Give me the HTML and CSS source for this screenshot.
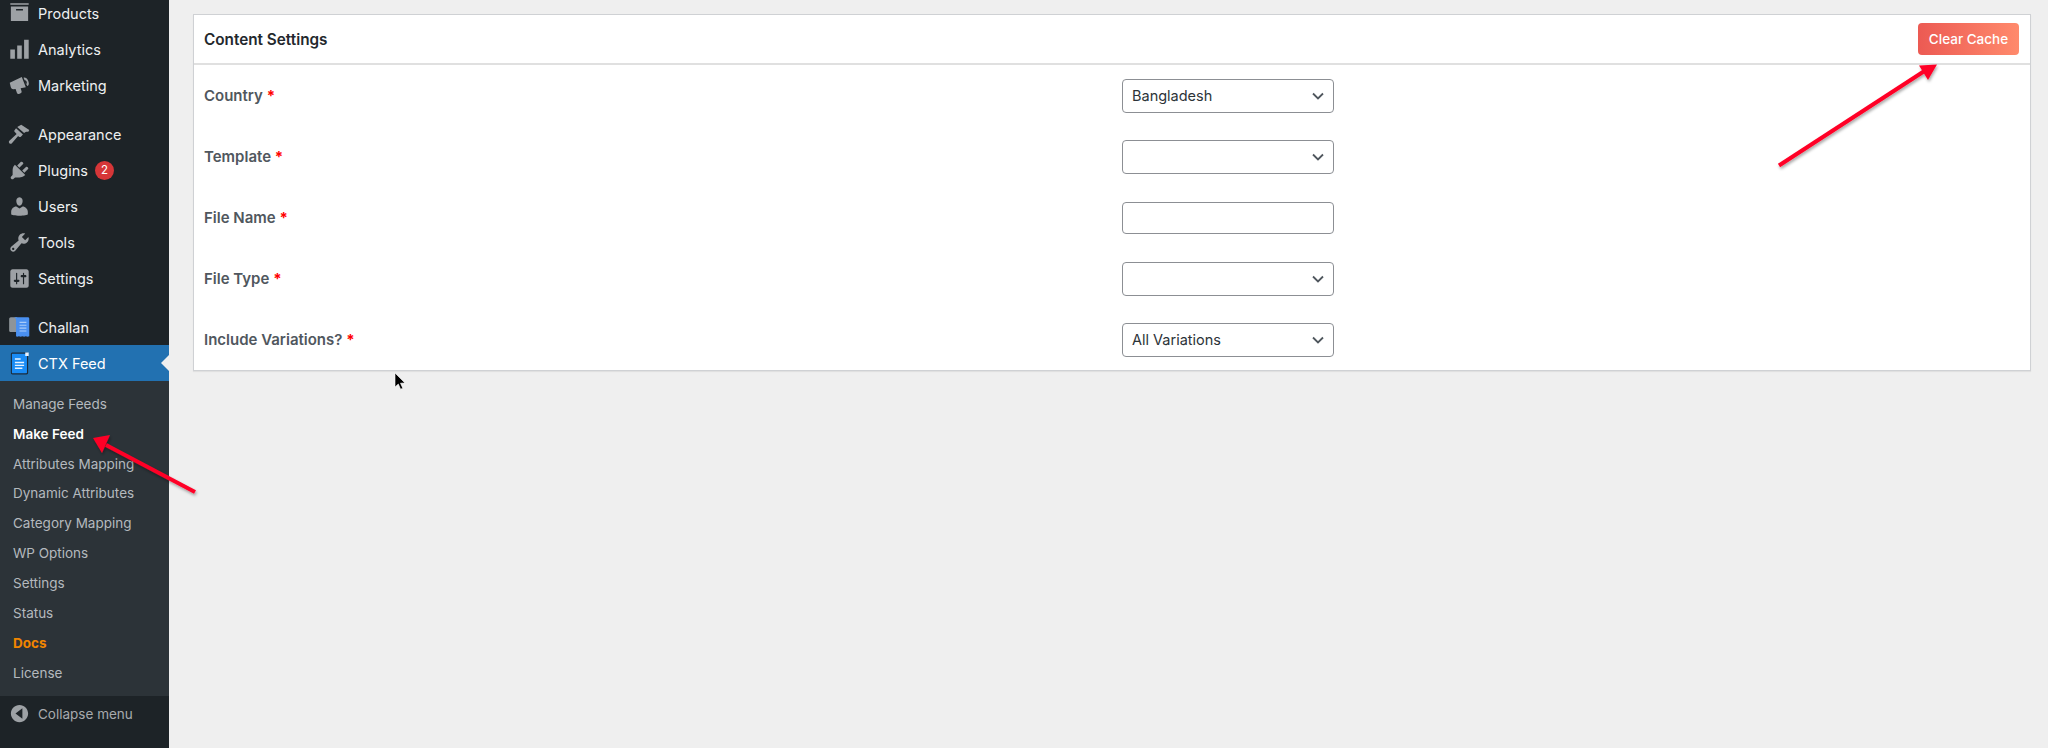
FILE: index.html
```html
<!DOCTYPE html>
<html lang="en">
<head>
<meta charset="utf-8">
<title>Make Feed</title>
<link rel="stylesheet" href="styles.css">
</head>
<body>
<div class="app">
  <aside class="sidebar">
    <ul class="menu">
      <li class="item"><svg class="icon" viewBox="0 0 20 20"><path d="M2 1h16v1.400H2zM2.500 4h15v12.500h-15zM7 6v1.300h6V6z" fill-rule="evenodd"/></svg><span>Products</span></li>
      <li class="item"><svg class="icon" viewBox="0 0 20 20"><path d="M2 10h4v8H2zM8 6.500h4V18H8zM14 1.500h4V18h-4z"/></svg><span>Analytics</span></li>
      <li class="item item-last"><svg class="icon" viewBox="0 0 20 20"><path d="M1.500 7.500L12 2.500l3.500 9-4.500.8.800 2.700c.2.800-.2 1.500-.9 1.800l-1.300.5c-.8.300-1.500 0-1.800-.8l-1.200-3.500-1.700.3c-1.500.2-2.300-1-2.500-2zM13.500 3.200c2.600-.8 4.600 2.800 4.600 5 0 1.200-.5 2-1.400 2.300zM14.500 5.500l1.300 3.400c.7-.5.7-1.300.4-2.100-.3-.8-.9-1.300-1.700-1.300z" fill-rule="evenodd"/></svg><span>Marketing</span></li>
      <li class="item"><svg class="icon" viewBox="0 0 20 20"><path d="M11.500 1.500l7 4.500-.8 1.700c-1.500-.2-2.700.1-3.700 1.100L8 3.500zM7 4.500l6 5.500-1.800 1.900c-.5.5-1.200.5-1.700 0l-.7-.7-5.400 6.300c-.6.700-1.600.7-2.200.1s-.6-1.500 0-2.100L7.500 9.500l-1.800-1.800c-.4-.4-.4-1 0-1.400z"/></svg><span>Appearance</span></li>
      <li class="item"><svg class="icon" viewBox="0 0 20 20"><path d="M13.110 4.360L9.870 7.600 8 5.730l3.240-3.240c.35-.34 1.050-.2 1.560.32.52.51.66 1.210.31 1.550zm-8 1.770l.91-1.120 9.010 9.010-1.190.84c-.71.71-2.630 1.160-3.820 1.160H6.140L4.900 17.260c-.59.59-1.540.59-2.120 0-.59-.58-.59-1.530 0-2.120l1.240-1.240v-3.880c0-1.130.4-3.190 1.090-3.890zm7.260 3.970l3.240-3.240c.34-.35 1.040-.21 1.550.31.52.51.66 1.210.31 1.550l-3.240 3.250z"/></svg><span>Plugins</span><span class="badge">2</span></li>
      <li class="item"><svg class="icon" viewBox="0 0 20 20"><path d="M10 9.250c-2.270 0-2.730-3.440-2.730-3.440C7 4.020 7.820 2 9.970 2c2.160 0 2.980 2.020 2.710 3.810 0 0-.41 3.440-2.680 3.440zm0 2.570L12.720 10c2.390 0 4.520 2.330 4.520 4.530v2.490s-3.650 1.130-7.240 1.130c-3.650 0-7.240-1.130-7.240-1.130v-2.490c0-2.250 1.940-4.480 4.470-4.480z"/></svg><span>Users</span></li>
      <li class="item"><svg class="icon" viewBox="0 0 20 20"><path d="M16.680 9.770c-1.340 1.340-3.300 1.670-4.950.99l-5.410 6.520c-.99.99-2.590.99-3.580 0s-.99-2.590 0-3.570l6.520-5.420c-.68-1.650-.35-3.610.99-4.950 1.280-1.280 3.120-1.620 4.720-1.060l-2.890 2.890 2.820 2.820 2.860-2.870c.53 1.580.18 3.390-1.080 4.650zM3.810 16.210c.4.39 1.040.39 1.430 0 .4-.4.4-1.040 0-1.430-.39-.4-1.030-.4-1.430 0-.39.39-.39 1.030 0 1.430z"/></svg><span>Tools</span></li>
      <li class="item item-last"><svg class="icon" viewBox="0 0 20 20"><path d="M18 16V4c0-1.100-.9-2-2-2H4c-1.100 0-2 .9-2 2v12c0 1.100.9 2 2 2h12c1.100 0 2-.9 2-2zM8 11h1c.55 0 1 .45 1 1s-.45 1-1 1H8v1.500c0 .28-.22.5-.5.5s-.5-.22-.5-.5V13H6c-.55 0-1-.45-1-1s.45-1 1-1h1V5.500c0-.28.22-.5.5-.5s.5.22.5.5V11zm5-2h-1c-.55 0-1-.45-1-1s.45-1 1-1h1V5.500c0-.28.22-.5.5-.5s.5.22.5.5V7h1c.55 0 1 .45 1 1s-.45 1-1 1h-1v5.500c0 .28-.22.5-.5.5s-.5-.22-.5-.5V9z"/></svg><span>Settings</span></li>
      <li class="item"><svg class="icon" viewBox="0 0 20 20"><path class="doc-grey" d="M1 2.500C1 1.700 1.700 1 2.500 1H8v13H2.500C1.700 14 1 13.300 1 12.500z"/><path class="doc-blue" d="M4.500 1h13c.8 0 1 .7 1 1.500V17.500l-1.500.6-1.500-.6-1.500.6-1.500-.6-1.500.6-1.500-.6-1.500.6-1-.6V4c0-2-1-3-2-3z"/><path class="doc-line" d="M10 5h6v1h-6zM10 7.500h6v1h-6zM10 10h6v1h-6zM10 12.500h6v1h-6z"/></svg><span>Challan</span></li>
      <li class="item item-active"><svg class="icon" viewBox="0 0 20 20"><path class="doc-edge" d="M4 .5h12c1 0 1.500.5 1.500 1.500v16c0 1-.5 1.500-1.500 1.500H4c-1 0-1.500-.5-1.500-1.500V2C2.500 1 3 .5 4 .5z"/><path class="doc-bright" d="M4 1.500h11.500c.6 0 1 .4 1 1v15c0 .6-.4 1-1 1H4c-.6 0-.6-.4-.6-1v-15c0-.6 0-1 .6-1z"/><path class="doc-line-w" d="M6 5.500h5v1.200H6zM6 8.500h8v1.200H6zM6 11h8v1.200H6zM6 13.500h6.500v1.200H6zM15 .5h3v3h-3z"/></svg><span>CTX Feed</span></li>
    </ul>
    <ul class="submenu">
      <li class="sub-item">Manage Feeds</li>
      <li class="sub-item sub-current">Make Feed</li>
      <li class="sub-item">Attributes Mapping</li>
      <li class="sub-item">Dynamic Attributes</li>
      <li class="sub-item">Category Mapping</li>
      <li class="sub-item">WP Options</li>
      <li class="sub-item">Settings</li>
      <li class="sub-item">Status</li>
      <li class="sub-item sub-docs">Docs</li>
      <li class="sub-item">License</li>
    </ul>
    <div class="collapse"><svg class="icon" viewBox="0 0 20 20"><path d="M10 2.500c-4.140 0-7.500 3.360-7.500 7.500s3.360 7.500 7.500 7.500 7.500-3.360 7.500-7.500-3.360-7.500-7.500-7.500zM12.500 14.500L6.500 10l6-4.500z" fill-rule="evenodd"/></svg><span>Collapse menu</span></div>
  </aside>
  <main class="main">
    <section class="card">
      <header class="card-head">
        <h2 class="card-title">Content Settings</h2>
        <button class="clear-btn" type="button">Clear Cache</button>
      </header>
      <form class="form">
        <div class="row"><label class="label">Country <b class="req">*</b></label><select class="control"><option>Bangladesh</option></select></div>
        <div class="row"><label class="label">Template <b class="req">*</b></label><select class="control"><option></option></select></div>
        <div class="row"><label class="label">File Name <b class="req">*</b></label><input class="control control-input" type="text"></div>
        <div class="row"><label class="label">File Type <b class="req">*</b></label><select class="control"><option></option></select></div>
        <div class="row"><label class="label">Include Variations? <b class="req">*</b></label><select class="control"><option>All Variations</option></select></div>
      </form>
    </section>
  </main>
</div>
<svg class="overlay" width="2048" height="748" viewBox="0 0 2048 748">
  <defs><filter id="sh" x="-20%" y="-20%" width="140%" height="140%"><feDropShadow dx="1" dy="2" stdDeviation="1.500" flood-color="#000" flood-opacity=".35"/></filter></defs>
  <g class="arrow" filter="url(#sh)">
    <path d="M1779 165.500L1926 70" class="arrow-line"/>
    <path d="M1937 64.500L1919 65.500 1928 80z"/>
    <path d="M195 492L106 445" class="arrow-line"/>
    <path d="M93 438L110 435 102 453z"/>
  </g>
  <path class="cursor" d="M395 373v14l3.300-3 2.300 5.200 2.200-1-2.300-5 4.500-.2z"/>
</svg>
</body>
</html>
```

FILE: styles.css
```css
* { box-sizing: border-box; }
html, body { margin: 0; height: 748px; overflow: hidden; }
body { background: #efefef; font-family: Inter, "Liberation Sans", sans-serif; position: relative; }
ul { list-style: none; margin: 0; padding: 0; }

.app { display: flex; height: 748px; }

.sidebar { width: 169px; flex: none; background: #1d2327; display: flex; flex-direction: column; overflow: hidden; }
.menu { margin-top: -4.500px; }
.item { height: 36.200px; display: flex; align-items: center; padding-left: 8px; color: #eef0f1; font-size: 14.500px; position: relative; }
.item-last { margin-bottom: 12px; }
.icon { width: 23px; height: 23px; flex: none; margin-right: 7px; fill: #9da1a5; }
.item-active { background: #2271b1; color: #fff; }
.item-active::after { content: ""; position: absolute; right: 0; top: 50%; margin-top: -8px; border: 8px solid transparent; border-left: 0; border-right-color: #efefef; }
.badge { margin-left: 7px; width: 19px; height: 19px; border-radius: 50%; background: #d63638; color: #fff; font-size: 11.500px; display: flex; align-items: center; justify-content: center; }

.doc-grey { fill: #8e9499; }
.doc-blue { fill: #4a90f0; }
.doc-line { fill: #a9cbf7; }
.doc-edge { fill: #1b2b3a; }
.doc-bright { fill: #1a8cf5; }
.doc-line-w { fill: #e8f3ff; }

.submenu { background: #2c3338; padding: 7.500px 0 8px; }
.sub-item { height: 29.900px; display: flex; align-items: center; padding-left: 13px; color: #b4b9be; font-size: 13.500px; white-space: nowrap; }
.sub-current { color: #fff; font-weight: 600; }
.sub-docs { color: #f18500; font-weight: 700; }

.collapse { height: 36px; display: flex; align-items: center; padding-left: 8px; color: #a7aaad; font-size: 13.500px; }

.main { flex: 1; padding: 14px 17px 0 24px; }
.card { background: #fff; border: 1px solid #cfd1d4; box-shadow: 0 1px 1px rgba(0,0,0,.06); }
.card-head { height: 50px; border-bottom: 2px solid #e0e0e0; display: flex; align-items: center; justify-content: space-between; padding: 0 11px 0 10px; }
.card-title { margin: 0; font-size: 15.300px; font-weight: 600; color: #23282d; }
.clear-btn { width: 101px; height: 32px; border: 0; border-radius: 4px; background: linear-gradient(90deg, #ec5a53, #ff8a6c); color: #fff; font: 500 13.500px Inter, "Liberation Sans", sans-serif; padding: 0; }

.row { height: 61px; display: grid; grid-template-columns: 918px 212px; align-items: center; padding-left: 10px; }
.label { font-size: 15px; font-weight: 600; color: #50575e; }
.req { color: #ff0000; font-weight: 700; }
.control { width: 212px; height: 34px; border: 1px solid #8c8f94; border-radius: 4px; background: #fff; font: 14.500px Inter, "Liberation Sans", sans-serif; color: #2c3338; padding: 0 24px 0 9px; appearance: none; -webkit-appearance: none; background-image: url("data:image/svg+xml,%3Csvg xmlns='http://www.w3.org/2000/svg' width='14' height='14' viewBox='0 0 14 14'%3E%3Cpath d='M2 4.500l5 5 5-5' fill='none' stroke='%2350575e' stroke-width='1.800'/%3E%3C/svg%3E"); background-repeat: no-repeat; background-position: right 8px center; }
.control-input { height: 32px; background-image: none; }

.overlay { position: absolute; left: 0; top: 0; pointer-events: none; }
.arrow { fill: #ff0027; }
.arrow-line { fill: none; stroke: #ff0027; stroke-width: 4; }
.cursor { fill: #000; stroke: #fff; stroke-width: .6; }
```
